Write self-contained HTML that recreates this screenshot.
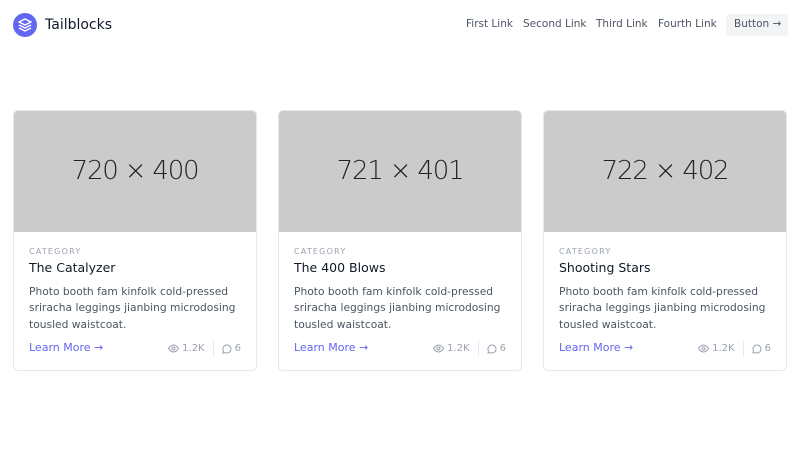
<!DOCTYPE html>
<html><head><meta charset="utf-8"><style>
*{box-sizing:border-box;margin:0;padding:0}
body{width:800px;height:450px;background:#fff;font-family:"DejaVu Sans","Liberation Sans",sans-serif;position:relative;overflow:hidden;color:#4b5563}
.logo{position:absolute;left:13px;top:13px;width:24px;height:24px;border-radius:50%;background:#6366f1}
.brand{position:absolute;left:45px;top:17px;font-size:14px;color:#111827}
.nav{position:absolute;top:18px;font-size:10.5px;color:#4b5563}
.btn{position:absolute;left:726px;top:14px;width:62px;height:22px;background:#f3f4f6;border-radius:3px;font-size:10.5px;padding:4px 0 0 8px;color:#4b5563}
.card{position:absolute;top:110px;width:244px;height:261px;border:1px solid #e5e7eb;border-radius:5px;overflow:hidden}
.img{height:121px;background:#cbcbcb;color:#222;font-size:26px;font-weight:300;text-align:center;line-height:121px;letter-spacing:-1.2px}
.cat{position:absolute;left:15px;top:136px;font-size:8px;letter-spacing:1.2px;color:#9ca3af}
.t{position:absolute;left:15px;top:149px;font-size:12.5px;color:#111827}
.p{position:absolute;left:15px;top:173px;width:220px;font-size:10.7px;line-height:16.3px;color:#4b5563}
.lm{position:absolute;left:15px;top:230px;font-size:11px;color:#6366f1}
.st{position:absolute;right:15px;top:230px;font-size:10px;color:#9ca3af;display:flex;align-items:center}
.st svg{margin-right:3px}
.sep{width:1px;height:15px;background:#e5e7eb;margin:0 8px}
</style></head><body>
<div class="logo"><svg width="24" height="24" viewBox="0 0 24 24" fill="none" stroke="#fff" stroke-width="1.5" stroke-linejoin="round"><path d="M12 6l6 3-6 3-6-3z"/><path d="M6 12l6 3 6-3"/><path d="M6 15l6 3 6-3"/></svg></div>
<div class="brand">Tailblocks</div>
<div class="nav" style="left:466px">First Link</div>
<div class="nav" style="left:523px">Second Link</div>
<div class="nav" style="left:596px">Third Link</div>
<div class="nav" style="left:658px">Fourth Link</div>
<div class="btn">Button →</div>

<div class="card" style="left:13px"><div class="img">720 × 400</div><div class="cat">CATEGORY</div><div class="t">The Catalyzer</div><div class="p">Photo booth fam kinfolk cold-pressed sriracha leggings jianbing microdosing tousled waistcoat.</div><div class="lm">Learn More →</div><div class="st"><svg width="11" height="9" viewBox="0 0 22 16" fill="none" stroke="#9ca3af" stroke-width="2"><path d="M1 8s4-7 10-7 10 7 10 7-4 7-10 7S1 8 1 8z"/><circle cx="11" cy="8" r="3"/></svg>1.2K<span class="sep"></span><svg width="10" height="10" viewBox="0 0 20 20" fill="none" stroke="#9ca3af" stroke-width="2"><path d="M10 2a8 8 0 1 1-3.5 15.2L2 18l1-4A8 8 0 0 1 10 2z"/></svg>6</div></div>
<div class="card" style="left:278px"><div class="img">721 × 401</div><div class="cat">CATEGORY</div><div class="t">The 400 Blows</div><div class="p">Photo booth fam kinfolk cold-pressed sriracha leggings jianbing microdosing tousled waistcoat.</div><div class="lm">Learn More →</div><div class="st"><svg width="11" height="9" viewBox="0 0 22 16" fill="none" stroke="#9ca3af" stroke-width="2"><path d="M1 8s4-7 10-7 10 7 10 7-4 7-10 7S1 8 1 8z"/><circle cx="11" cy="8" r="3"/></svg>1.2K<span class="sep"></span><svg width="10" height="10" viewBox="0 0 20 20" fill="none" stroke="#9ca3af" stroke-width="2"><path d="M10 2a8 8 0 1 1-3.5 15.2L2 18l1-4A8 8 0 0 1 10 2z"/></svg>6</div></div>
<div class="card" style="left:543px"><div class="img">722 × 402</div><div class="cat">CATEGORY</div><div class="t">Shooting Stars</div><div class="p">Photo booth fam kinfolk cold-pressed sriracha leggings jianbing microdosing tousled waistcoat.</div><div class="lm">Learn More →</div><div class="st"><svg width="11" height="9" viewBox="0 0 22 16" fill="none" stroke="#9ca3af" stroke-width="2"><path d="M1 8s4-7 10-7 10 7 10 7-4 7-10 7S1 8 1 8z"/><circle cx="11" cy="8" r="3"/></svg>1.2K<span class="sep"></span><svg width="10" height="10" viewBox="0 0 20 20" fill="none" stroke="#9ca3af" stroke-width="2"><path d="M10 2a8 8 0 1 1-3.5 15.2L2 18l1-4A8 8 0 0 1 10 2z"/></svg>6</div></div>
</body></html>
